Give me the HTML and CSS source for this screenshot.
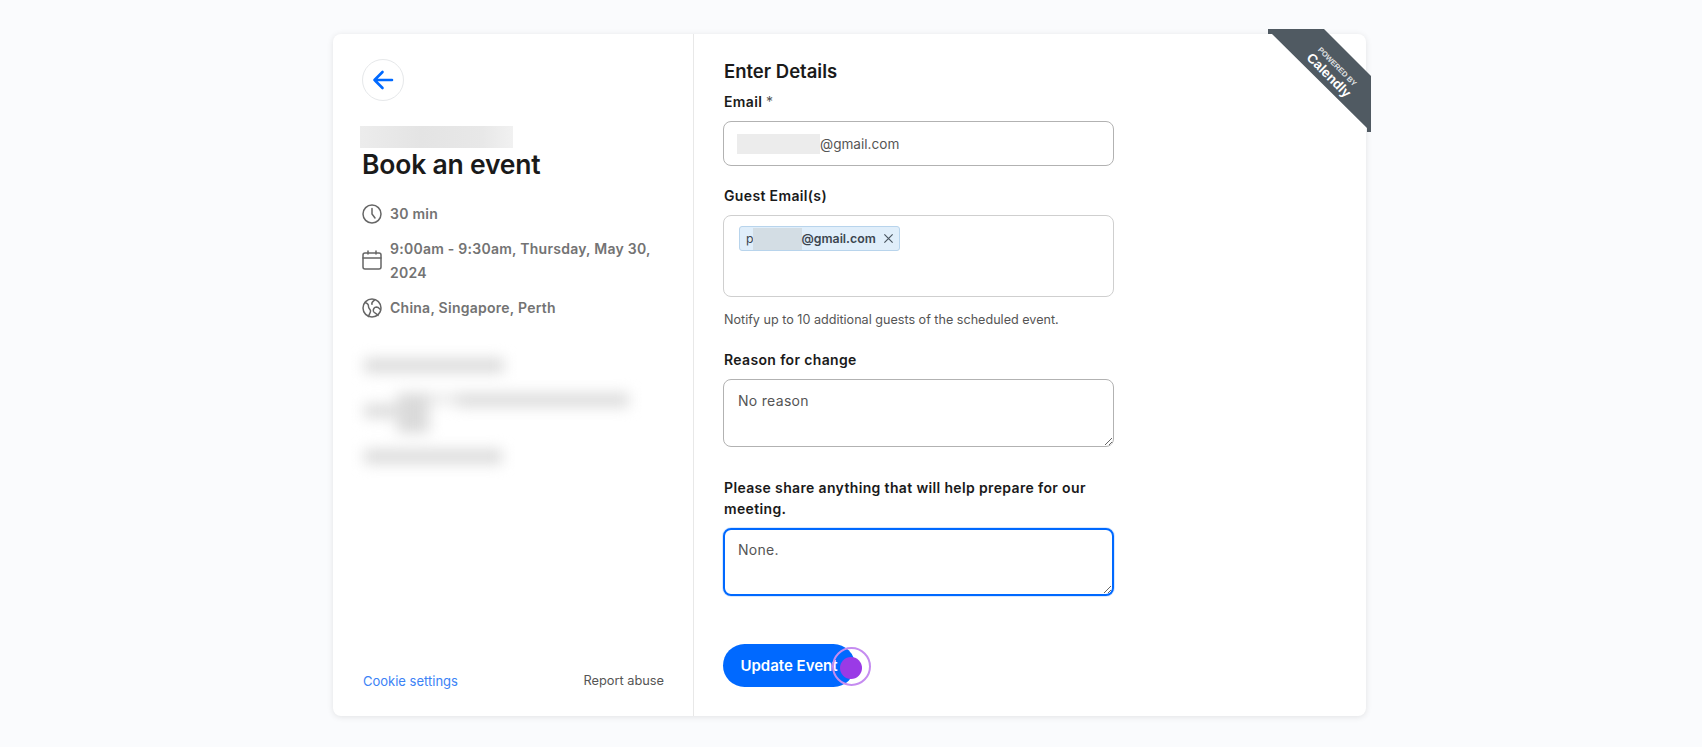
FILE: index.html
```html
<!DOCTYPE html>
<html lang="en">
<head>
<meta charset="utf-8">
<title>Book an event</title>
<link rel="stylesheet" href="styles.css">
</head>
<body>
<main class="card">
  <aside class="side">
    <button class="back" aria-label="Back">
      <svg width="24" height="24" viewBox="0 0 24 24" fill="none" stroke="#0069ff" stroke-width="2.6" stroke-linecap="round" stroke-linejoin="round"><path d="M21 12H3.500M11.500 4l-8 8 8 8"/></svg>
    </button>
    <div class="blur-name"></div>
    <h1 class="title">Book an event</h1>
    <ul class="meta">
      <li class="meta-row">
        <svg class="meta-icon" viewBox="0 0 20 20" fill="none" stroke="#666" stroke-width="1.500" stroke-linecap="round"><circle cx="10" cy="10" r="9"/><path d="M10 4.500V10l3 4"/></svg>
        <span>30 min</span>
      </li>
      <li class="meta-row">
        <svg class="meta-icon meta-icon-cal" viewBox="0 0 20 20" fill="none" stroke="#666" stroke-width="1.500" stroke-linecap="round"><rect x="1" y="3" width="18" height="16" rx="2"/><path d="M1 8h18M6 1v3M14 1v3"/></svg>
        <span>9:00am - 9:30am, Thursday, May 30, 2024</span>
      </li>
      <li class="meta-row">
        <svg class="meta-icon" viewBox="0 0 20 20" fill="none" stroke="#666" stroke-width="1.500" stroke-linecap="round" stroke-linejoin="round"><circle cx="10" cy="10" r="9"/><path d="M3 4.500c2 .5 3.500 2 3.500 4s1.500 2.500 2 4-1 3-2 6M13 1.800c-2 1.500-4 2.500-3 4.500M18.700 12c-1.500-1.500-2-3-4.200-3a3.300 3.300 0 0 0-3 4.500c.8 1.800 3.500 2 4.500 4"/></svg>
        <span>China, Singapore, Perth</span>
      </li>
    </ul>
    <div class="blur-block">
      <div class="blur-line blur-a"></div>
      <div class="blur-mid">
        <div class="blur-line blur-b"></div>
        <div class="blur-line blur-e"></div>
        <div class="blur-blob"></div>
        <div class="blur-line blur-c"></div>
      </div>
      <div class="blur-line blur-d"></div>
    </div>
    <footer class="side-foot">
      <a class="cookie">Cookie settings</a>
      <a class="report">Report abuse</a>
    </footer>
  </aside>
  <section class="form">
    <h2 class="form-title">Enter Details</h2>
    <div class="label label-email">Email <span class="req">*</span></div>
    <div class="field field-email"><span class="mask"></span><span>@gmail.com</span></div>
    <div class="label label-guest">Guest Email(s)</div>
    <div class="field field-guest">
      <span class="chip"><span class="chip-p">p</span><span class="chip-mask"></span><span>@gmail.com</span>
        <svg class="chip-x" viewBox="0 0 12 12" fill="none" stroke="#4a5560" stroke-width="1.300"><path d="M1.500 1.500l9 9M10.500 1.500l-9 9"/></svg>
      </span>
    </div>
    <p class="hint">Notify up to 10 additional guests of the scheduled event.</p>
    <div class="label label-reason">Reason for change</div>
    <textarea class="area area-reason" readonly>No reason</textarea>
    <div class="label label-share">Please share anything that will help prepare for our meeting.</div>
    <textarea class="area area-focus" readonly>None.</textarea>
    <div class="btn-wrap">
      <button class="submit">Update Event</button>
      <span class="cursor-ring"></span>
      <span class="cursor-dot"></span>
    </div>
  </section>
  <div class="ribbon">
    <svg width="103" height="103" viewBox="0 0 103 103"><path d="M0 0H56L103 47V103H99V99L4 5H0Z" fill="#505a62"/></svg>
    <div class="ribbon-text">
      <span class="ribbon-small">POWERED BY</span>
      <span class="ribbon-big">Calendly</span>
    </div>
  </div>
</main>
</body>
</html>
```
FILE: styles.css
```css
* { box-sizing: border-box; }
html, body { margin: 0; height: 100%; }
body {
  background: #fafbfd;
  font-family: Inter, "Liberation Sans", sans-serif;
  color: #1a1a1a;
  overflow: hidden;
  padding: 34px 0 0 333px;
}
.card {
  position: relative;
  display: flex;
  width: 1033px;
  height: 682px;
  background: #fff;
  border-radius: 8px;
  box-shadow: 0 1px 6px rgba(0, 0, 0, .1);
}
.side {
  width: 361px;
  flex: none;
  border-right: 1px solid #e8e8e8;
  padding: 25px 29px 0 29px;
  display: flex;
  flex-direction: column;
}
.back {
  width: 42px;
  height: 42px;
  border-radius: 50%;
  border: 1px solid #e6e8ea;
  background: #fff;
  padding: 0;
  display: flex;
  align-items: center;
  justify-content: center;
}
.blur-name {
  width: 153px;
  height: 22px;
  margin: 25px 0 0 -2px;
  background: linear-gradient(90deg, #ececec, #e4e4e4 40%, #e8e8e8 80%, #f1f1f1);
  filter: blur(.6px);
}
.title {
  margin: -1px 0 0;
  font-size: 26.500px;
  line-height: 34px;
  font-weight: 600;
  letter-spacing: -.2px;
  color: #1a1a1a;
}
.meta { list-style: none; margin: 21px 0 0; padding: 0; }
.meta-row {
  display: flex;
  align-items: center;
  gap: 8px;
  font-size: 14px;
  line-height: 24px;
  font-weight: 600;
  letter-spacing: .25px;
  color: #737373;
  margin-bottom: 11px;
}
.meta-icon { width: 20px; height: 20px; flex: none; }
.meta-icon-cal { margin-bottom: 3px; }
.blur-block {
  margin: 17px 0 0 -4px;
  padding: 10px 0 0 4px;
  filter: blur(7px);
  height: 124px;
}
.blur-line { background: #dcdcdc; height: 15px; }
.blur-a { width: 140px; margin-left: 2px; }
.blur-mid { position: relative; height: 57px; margin-top: 15px; }
.blur-b { position: absolute; left: 95px; top: 5px; width: 172px; height: 14px; }
.blur-e { position: absolute; left: 35px; top: 5px; width: 60px; height: 12px; background: #ececec; }
.blur-blob { position: absolute; left: 35px; top: 5px; width: 32px; height: 40px; background: #dadada; }
.blur-c { position: absolute; left: 2px; top: 16px; width: 32px; height: 14px; }
.blur-d { width: 138px; margin-left: 2px; margin-top: 4px; }
.side-foot {
  margin-top: auto;
  height: 43px;
  display: flex;
  justify-content: space-between;
  font-size: 13px;
  padding-left: 1px;
}
.cookie { color: #3b82f6; }
.report { color: #555; font-size: 12.800px; }
.form { padding: 23px 0 0 29px; width: 420px; }
.form-title {
  margin: 0 0 0 1px;
  font-size: 18.500px;
  line-height: 28px;
  font-weight: 600;
  color: #1a1a1a;
}
.label {
  font-size: 14px;
  line-height: 23px;
  font-weight: 600;
  letter-spacing: .35px;
  color: #1a1a1a;
  padding-left: 1px;
}
.label-email { margin-top: 5px; }
.req { font-weight: 400; color: #555; }
.field {
  width: 391px;
  border: 1px solid #b2b2b2;
  border-radius: 8px;
  background: #fff;
}
.field-email {
  height: 45px;
  margin-top: 8px;
  padding: 0 13px;
  display: flex;
  align-items: center;
  font-size: 13.600px;
  color: #555;
}
.mask { width: 83px; height: 20px; background: #ececec; }
.label-guest { margin-top: 18px; }
.field-guest {
  height: 82px;
  margin-top: 8px;
  border-color: #cfcfcf;
  padding: 10px 15px;
}
.chip {
  display: inline-flex;
  align-items: center;
  height: 25px;
  width: 161px;
  padding: 0 5px 0 6px;
  background: #e0eefa;
  border: 1px solid #b8d4ec;
  border-radius: 3px;
  font-size: 12.300px;
  font-weight: 600;
  color: #3c4650;
}
.chip-p { font-weight: 400; }
.chip-mask { width: 49px; height: 22px; background: #d3dde4; margin-left: -1px; }
.chip-x { width: 11px; height: 11px; margin-left: auto; }
.hint {
  margin: 14px 0 0 1px;
  font-size: 12.600px;
  line-height: 18px;
  color: #555;
}
.label-reason { margin-top: 19px; }
.area {
  display: block;
  width: 391px;
  margin: 8px 0 0;
  height: 68px;
  border: 1px solid #b2b2b2;
  border-radius: 8px;
  padding: 12px 14px;
  font: 14px/18px Inter, "Liberation Sans", sans-serif;
  letter-spacing: .3px;
  color: #555;
  resize: both;
  outline: none;
}
.label-share { margin-top: 30px; width: 391px; line-height: 21px; }
.area-focus { border: 2px solid #0069ff; box-shadow: 0 0 0 1px rgba(0,105,255,.15); padding: 11px 13px; margin-top: 9px; }
.btn-wrap { position: relative; margin-top: 48px; width: 150px; height: 43px; }
.submit {
  width: 132px;
  height: 43px;
  border: 0;
  border-radius: 22px;
  background: #0069ff;
  color: #fff;
  font: 600 15px Inter, "Liberation Sans", sans-serif;
  padding: 0;
  text-align: center;
}
.cursor-ring {
  position: absolute;
  left: 109px;
  top: 3px;
  width: 39px;
  height: 39px;
  border-radius: 50%;
  border: 2px solid #c58cf0;
}
.cursor-dot {
  position: absolute;
  left: 117px;
  top: 13px;
  width: 22px;
  height: 22px;
  border-radius: 50%;
  background: #9a3ae6;
}
.ribbon { position: absolute; left: 935px; top: -5px; width: 103px; height: 103px; }
.ribbon svg { display: block; }
.ribbon-text {
  position: absolute;
  left: 19px;
  top: 32px;
  width: 90px;
  transform: rotate(45deg);
  text-align: center;
  color: #fff;
  font-family: "Liberation Sans", sans-serif;
  line-height: 1;
}
.ribbon-small { display: block; font-size: 7.500px; font-weight: 700; color: #e0e3e5; }
.ribbon-big { display: block; font-size: 13.500px; font-weight: 700; margin-top: 1px; }
```
